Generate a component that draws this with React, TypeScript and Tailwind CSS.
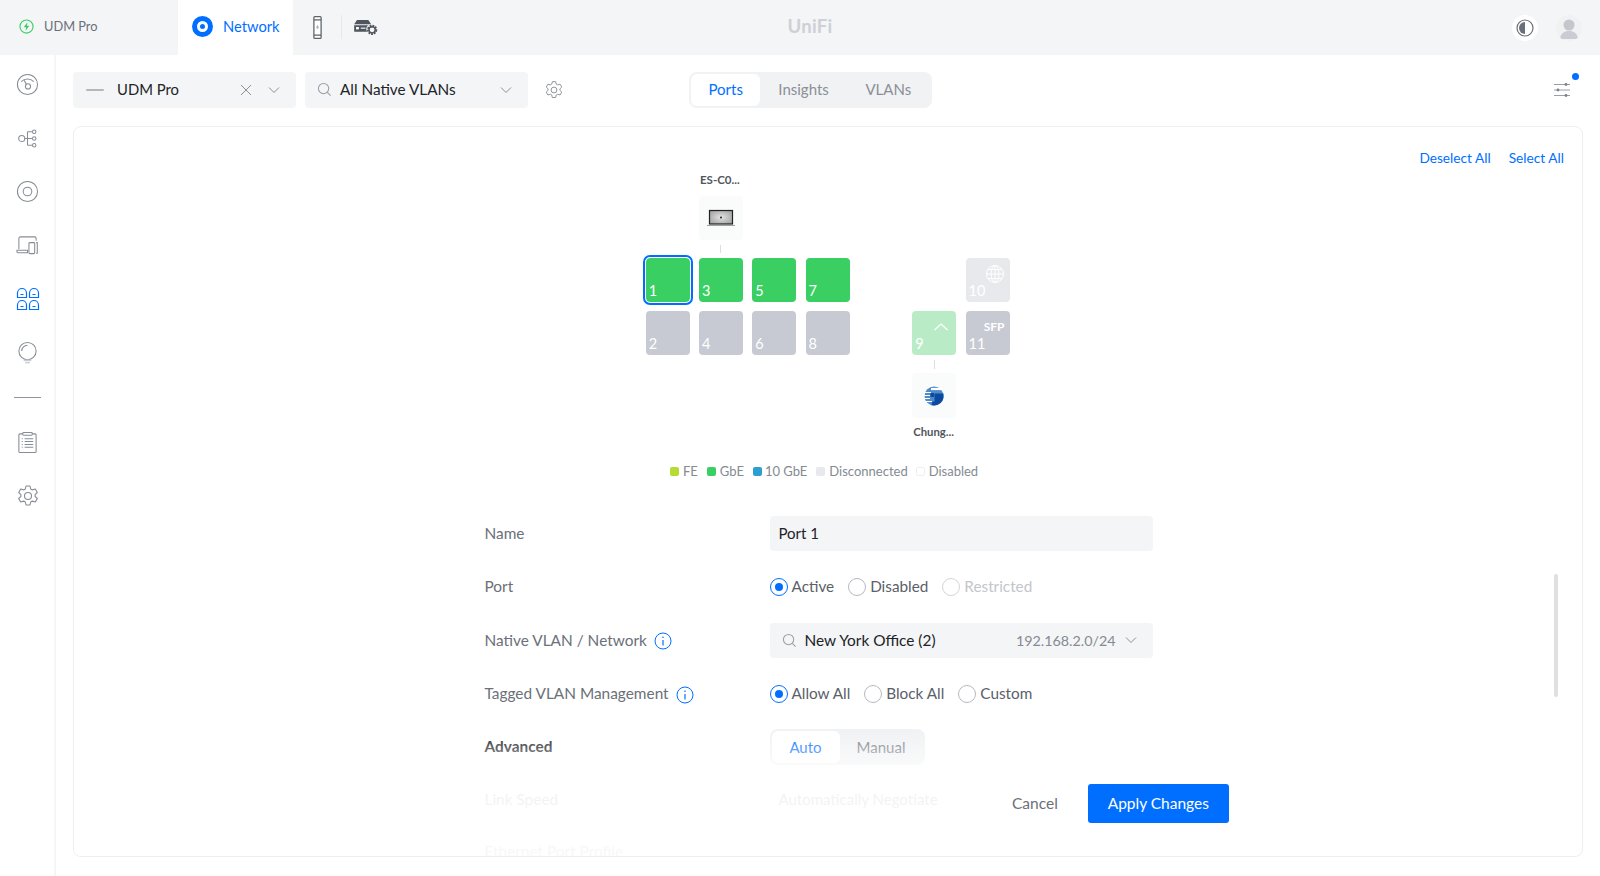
import React from "react";

function Tile({ n, kind, children, selected }: { n: string; kind: "on" | "off" | "up" | "dim"; children?: React.ReactNode; selected?: boolean }) {
  const bg = kind === "on" ? "bg-[#39cf63]" : kind === "off" ? "bg-[#c7cad3]" : kind === "up" ? "bg-[#b9ecc6]" : "bg-[#e8e9ed]";
  return (
    <div className={`relative w-[44px] h-[44px] rounded-[4px] ${bg}`}>
      {selected && <div className="absolute -inset-[3px] rounded-[7px] border-2 border-[#006fff] shadow-[inset_0_0_0_1px_#fff]" />}
      <span className="absolute left-[3px] bottom-[2px] text-[14.500px] leading-[18px] text-white">{n}</span>
      {children}
    </div>
  );
}

function Radio({ label, on, dim }: { label: string; on?: boolean; dim?: boolean }) {
  return (
    <div className="flex items-center gap-[4px]">
      <span className={`w-[18px] h-[18px] rounded-full border flex items-center justify-center ${on ? "border-[#006fff]" : "border-[#b6b9c1]"} ${dim ? "opacity-60" : ""}`}>
        {on && <span className="w-[8px] h-[8px] rounded-full bg-[#006fff]" />}
      </span>
      <span className={`text-[15.300px] ${dim ? "text-[#c3c6cc]" : "text-[#5b6069]"}`}>{label}</span>
    </div>
  );
}

function Info() {
  return (
    <svg viewBox="0 0 18 18" className="w-[18px] h-[18px] ml-[7px] mt-[2px]" fill="none" stroke="#006fff">
      <circle cx="9" cy="9" r="8" />
      <path d="M9 8v5.400" strokeWidth="1.200" />
      <circle cx="9" cy="5.300" r=".8" fill="#006fff" stroke="none" />
    </svg>
  );
}

function Chevron({ className }: { className?: string }) {
  return (
    <svg viewBox="0 0 12 8" className={`w-[12px] h-[8px] ${className ?? ""}`} fill="none" stroke="#8b8f97" strokeWidth="1">
      <path d="M1 1.500l5 5 5-5" />
    </svg>
  );
}

function Search() {
  return (
    <svg viewBox="0 0 16 16" className="w-[15px] h-[15px]" fill="none" stroke="#9a9ea6" strokeWidth="1.100">
      <circle cx="7" cy="7" r="5.500" />
      <path d="M11 11l3.500 3.500" />
    </svg>
  );
}

function Gear({ size, color, className }: { size: string; color: string; className?: string }) {
  return (
    <svg viewBox="0 0 24 24" className={`${size} ${className ?? ""}`} fill="none" stroke={color} strokeWidth="1.100" strokeLinejoin="round">
      <path d="M10 2h4l.7 3 1.600.9 3-.9 2 3.500-2.200 2.100v1.800l2.200 2.100-2 3.500-3-.9-1.600.9-.7 3h-4l-.7-3-1.600-.9-3 .9-2-3.500 2.200-2.100v-1.800L2.700 8.500l2-3.500 3 .9 1.600-.9z" />
      <circle cx="12" cy="12" r="3.500" />
    </svg>
  );
}

const S = "#878c96";

function SideIcon({ children }: { children: React.ReactNode }) {
  return <div className="h-[53.500px] flex items-center justify-center">{children}</div>;
}

function Row({ label, children, info }: { label: string; children?: React.ReactNode; info?: boolean }) {
  return (
    <div className="flex items-center h-[53.300px]">
      <div className="w-[285px] flex items-center text-[15.400px] text-[#6b7079]">
        {label}
        {info && <Info />}
      </div>
      {children}
    </div>
  );
}

export default function App() {
  return (
    <div className="w-[1600px] h-[876px] overflow-hidden bg-white flex flex-col font-['Lato',sans-serif] text-[#6b7079]">
      {/* top bar */}
      <header className="h-[55px] shrink-0 bg-[#f4f5f6] flex items-stretch relative">
        <div className="w-[178px] flex items-center pl-[19px] pb-[2px] gap-[10px] text-[12.800px]">
          <svg viewBox="0 0 16 16" className="w-[15px] h-[15px]" fill="none">
            <circle cx="8" cy="8" r="7" stroke="#39cf63" strokeWidth="1.200" />
            <path d="M9 3.500 5 8.800h2.600L7 12.500l4-5.300H8.400z" fill="#39cf63" />
          </svg>
          <span className="text-[#6b7079]">UDM Pro</span>
        </div>
        <div className="w-[115px] bg-white flex items-center pl-[14px] pb-[2px] gap-[10px]">
          <span className="w-[21px] h-[21px] rounded-full bg-[#006fff] flex items-center justify-center">
            <span className="w-[11px] h-[11px] rounded-full border-[3px] border-white" />
          </span>
          <span className="text-[#006fff] text-[14.700px]">Network</span>
        </div>
        <div className="flex items-center pl-[20px] pb-[1px]">
          <svg viewBox="0 0 10 26" className="w-[9px] h-[25px]">
            <rect x="1" y="1" width="8" height="24" rx="1" fill="#fff" stroke="#5d626b" strokeWidth="1.400" />
            <path d="M1 4.500h8M1 21.500h8" stroke="#5d626b" strokeWidth="1.400" />
            <path d="M5 10l1.200 2.500a1.300 1.300 0 1 1-2.400 0z" fill="#a7abb2" />
          </svg>
          <span className="w-px h-[24px] bg-[#e6e8eb] ml-[19px]" />
          <svg viewBox="0 0 26 18" className="w-[25px] h-[17px] ml-[11px]">
            <path d="M4 1h12l3 4.500H1z" fill="#50565e" />
            <path d="M1 6.500h15a4.500 4.500 0 0 0-1 7H1.500a.5.5 0 0 1-.5-.5z" fill="#50565e" />
            <rect x="3" y="8.500" width="3" height="2.500" fill="#fff" />
            <path d="M8 9.700h5" stroke="#fff" strokeWidth="1.200" />
            <circle cx="20" cy="11.500" r="4.200" fill="none" stroke="#50565e" strokeWidth="2.600" strokeDasharray="1.800 1" />
            <circle cx="20" cy="11.500" r="3.300" fill="none" stroke="#50565e" strokeWidth="1.500" />
          </svg>
        </div>
        <div className="absolute inset-0 flex items-center justify-center pl-[20px] pb-[1px] pointer-events-none">
          <span className="text-[18.500px] font-bold text-[#cdd0d5] tracking-[0.3px]">UniFi</span>
        </div>
        <div className="ml-auto flex items-center gap-[18px] pr-[18px]">
          <span className="w-[26px] h-[26px] rounded-full bg-white flex items-center justify-center">
            <svg viewBox="0 0 18 18" className="w-[18px] h-[18px]">
              <circle cx="9" cy="9" r="8" fill="#fff" stroke="#6a6f78" strokeWidth="1.200" />
              <path d="M9 3a6 6 0 0 0 0 12z" fill="#6a6f78" />
            </svg>
          </span>
          <span className="w-[26px] h-[26px] rounded-full bg-[#f0f1f3] overflow-hidden">
            <svg viewBox="0 0 26 26" className="w-[26px] h-[26px]">
              <circle cx="13" cy="10" r="5.500" fill="#c3c6cc" />
              <path d="M4 24c.5-5.500 4-8 9-8s8.500 2.500 9 8z" fill="#c9ccd2" />
            </svg>
          </span>
        </div>
      </header>

      <div className="flex-1 flex min-h-0">
        {/* sidebar */}
        <aside className="w-[56px] shrink-0 border-r-2 border-[#f6f6f7] flex flex-col pt-[3px] pl-[1px]">
          <SideIcon>
            <svg viewBox="0 0 24 24" className="w-[23px] h-[23px]" fill="none" stroke={S} strokeWidth="1.100">
              <circle cx="12" cy="12" r="10.500" />
              <path d="M5.500 9a9 9 0 0 1 13 0" />
              <path d="M8.500 7.500 11 12" />
              <circle cx="12.500" cy="14" r="2.700" />
            </svg>
          </SideIcon>
          <SideIcon>
            <svg viewBox="0 0 24 24" className="w-[23px] h-[23px]" fill="none" stroke={S} strokeWidth="1.100">
              <circle cx="6" cy="12" r="3.200" />
              <path d="M9 12h8M12 5h5M12 19h5M12 5v14" />
              <circle cx="19" cy="5" r="1.800" />
              <circle cx="19" cy="12" r="1.800" />
              <circle cx="19" cy="19" r="1.800" />
            </svg>
          </SideIcon>
          <SideIcon>
            <svg viewBox="0 0 24 24" className="w-[23px] h-[23px]" fill="none" stroke={S} strokeWidth="1.100">
              <circle cx="12" cy="12" r="10.500" />
              <circle cx="12" cy="12" r="4.500" />
            </svg>
          </SideIcon>
          <SideIcon>
            <svg viewBox="0 0 24 24" className="w-[23px] h-[23px]" fill="none" stroke={S} strokeWidth="1.100">
              <path d="M3 16V4.500A1.500 1.500 0 0 1 4.500 3h15A1.500 1.500 0 0 1 21 4.500V7" />
              <path d="M1 17h11v2.500H2a1 1 0 0 1-1-1z" />
              <rect x="13.500" y="9" width="6" height="11.500" rx="1" />
              <path d="M21 9h1.200v11H21" />
            </svg>
          </SideIcon>
          <SideIcon>
            <svg viewBox="0 0 24 24" className="w-[24px] h-[24px]" fill="none" stroke="#006fff" strokeWidth="1.200">
              <path d="M1.500 10.500V6a4.500 4.500 0 0 1 9 0v4.500zM13.500 10.500V6a4.500 4.500 0 0 1 9 0v4.500zM1.500 22.500V18a4.500 4.500 0 0 1 9 0v4.500zM13.500 22.500V18a4.500 4.500 0 0 1 9 0v4.500z" />
              <path d="M4.500 7.500h3M16.500 7.500h3M4.500 19.500h3M16.500 19.500h3" />
            </svg>
          </SideIcon>
          <SideIcon>
            <svg viewBox="0 0 24 24" className="w-[23px] h-[23px]" fill="none" stroke={S} strokeWidth="1.100">
              <circle cx="12" cy="10.500" r="9" />
              <path d="M6 10.500a6 6 0 0 1 6-6" />
              <path d="M8 20h8M9.500 22.500h5" strokeWidth="1.600" stroke="#c9ccd2" />
            </svg>
          </SideIcon>
          <div className="h-px w-[27px] bg-[#8f939b] self-center mt-[18px] mb-[18px]" />
          <SideIcon>
            <svg viewBox="0 0 24 24" className="w-[23px] h-[23px]" fill="none" stroke={S} strokeWidth="1.100">
              <rect x="3" y="3" width="18" height="19.500" rx="1.200" />
              <rect x="7" y="1.500" width="10" height="3" rx="1" fill="#fff" />
              <path d="M6 8h1M9 8h9M6 11h1M9 11h9M6 14h1M9 14h9M6 17h1M9 17h9" />
            </svg>
          </SideIcon>
          <SideIcon>
            <Gear size="w-[24px] h-[24px]" color={S} />
          </SideIcon>
        </aside>

        {/* main */}
        <main className="flex-1 min-w-0 pl-[17px] pr-[17px] relative">
          {/* toolbar */}
          <div className="h-[69px] mb-[2px] flex items-center">
            <div className="w-[223px] h-[36px] rounded-[4px] bg-[#f4f5f6] flex items-center pl-[13px] pr-[16px]">
              <span className="w-[18px] h-[2px] bg-[#b4b7bd] rounded-full" />
              <span className="ml-[13px] text-[14.800px] text-[#212327]">UDM Pro</span>
              <svg viewBox="0 0 12 12" className="w-[12px] h-[12px] ml-auto mr-[16px]" fill="none" stroke="#8b8f97">
                <path d="M1 1l10 10M11 1 1 11" />
              </svg>
              <Chevron />
            </div>
            <div className="w-[223px] h-[36px] rounded-[4px] bg-[#f4f5f6] flex items-center pl-[12px] pr-[16px] ml-[9px]">
              <Search />
              <span className="ml-[8px] text-[15.300px] text-[#212327]">All Native VLANs</span>
              <Chevron className="ml-auto" />
            </div>
            <Gear size="w-[20px] h-[20px]" color={S} className="ml-[16px]" />
            <div className="ml-[125px] w-[243px] h-[36px] rounded-[8px] bg-[#f1f2f4] p-[2px] flex text-[15px]">
              <div className="w-[70px] rounded-[6px] bg-white text-[#006fff] flex items-center justify-center">Ports</div>
              <div className="w-[87px] flex items-center justify-center text-[#8b8f97]">Insights</div>
              <div className="w-[84px] flex items-center justify-center text-[#8b8f97]">VLANs</div>
            </div>
            <div className="ml-auto relative mr-[13px]">
              <svg viewBox="0 0 16 14" className="w-[16px] h-[14px]" fill="none" stroke="#9a9ea6">
                <path d="M0 1.500h16M0 7h16M0 12.500h16" />
                <circle cx="12" cy="1.500" r="1.400" fill="#7c8088" stroke="none" />
                <circle cx="4" cy="7" r="1.400" fill="#7c8088" stroke="none" />
                <circle cx="12" cy="12.500" r="1.400" fill="#7c8088" stroke="none" />
              </svg>
              <span className="absolute -top-[10px] -right-[9px] w-[7px] h-[7px] rounded-full bg-[#006fff]" />
            </div>
          </div>

          {/* card */}
          <section className="h-[731px] rounded-[8px] border border-[#edeef0] relative overflow-hidden">
            <div className="absolute top-[21px] right-[18px] flex gap-[18px] text-[13.700px] text-[#006fff]">
              <span>Deselect All</span>
              <span>Select All</span>
            </div>

            {/* port diagram */}
            <div className="pt-[45px] pl-[571.700px] flex items-start">
              <div className="flex flex-col">
                <div className="ml-[53.300px] w-[44px] flex flex-col items-center">
                  <span className="w-[44px] pl-[1px] whitespace-nowrap text-[11.500px] font-bold text-[#50565e] leading-[16px] h-[16px]">ES-C0...</span>
                  <div className="mt-[8px] w-[44px] h-[44px] rounded-[4px] bg-[#fafbfb] flex items-center justify-center">
                    <svg viewBox="0 0 28 18" className="w-[28px] h-[18px]">
                      <defs>
                        <radialGradient id="scr" cx="50%" cy="50%" r="60%">
                          <stop offset="0%" stopColor="#e4e4e4" />
                          <stop offset="100%" stopColor="#a3a3a3" />
                        </radialGradient>
                      </defs>
                      <rect x="2.500" y="1.500" width="23" height="13.500" fill="url(#scr)" stroke="#222" strokeWidth="1.200" />
                      <path d="M0 16.500h28" stroke="#a0a0a0" strokeWidth="1" />
                      <circle cx="14" cy="8.500" r="1" fill="#222" />
                    </svg>
                  </div>
                  <span className="w-px h-[8px] bg-[#dcdee2] mt-[5px] mb-[5px]" />
                </div>
                <div className="grid grid-cols-[repeat(4,44px)] gap-x-[9.300px] gap-y-[9.300px]">
                  <Tile n="1" kind="on" selected />
                  <Tile n="3" kind="on" />
                  <Tile n="5" kind="on" />
                  <Tile n="7" kind="on" />
                  <Tile n="2" kind="off" />
                  <Tile n="4" kind="off" />
                  <Tile n="6" kind="off" />
                  <Tile n="8" kind="off" />
                </div>
              </div>
              <div className="ml-[62.700px] mt-[86px] grid grid-cols-[repeat(2,44px)] gap-x-[9.300px] gap-y-[9.300px] items-start">
                <div />
                <Tile n="10" kind="dim">
                  <svg viewBox="0 0 18 18" className="absolute top-[7px] right-[6px] w-[18px] h-[18px]" fill="none" stroke="#fff" strokeWidth="1">
                    <circle cx="9" cy="9" r="8.500" />
                    <ellipse cx="9" cy="9" rx="4" ry="8.500" />
                    <path d="M9 .5v17M.5 9h17M2 4.500h14M2 13.500h14" />
                  </svg>
                </Tile>
                <div className="flex flex-col items-center">
                  <Tile n="9" kind="up">
                    <svg viewBox="0 0 14 8" className="absolute top-[12px] right-[8px] w-[14px] h-[8px]" fill="none" stroke="#fff" strokeWidth="1.200">
                      <path d="M.5 7 7 1l6.500 6" />
                    </svg>
                  </Tile>
                  <span className="w-px h-[9px] bg-[#dcdee2] mt-[5px] mb-[4px]" />
                  <div className="w-[44px] h-[45px] rounded-[4px] bg-[#fafbfb] flex items-center justify-center">
                    <svg viewBox="0 0 20 20" className="w-[20px] h-[20px]">
                      <circle cx="10" cy="10" r="9.500" fill="#4f8ccb" />
                      <path d="M0 6.500h7M0 9.500h6M0 12.500h6M1 15.500h7" stroke="#fff" strokeWidth="1" />
                      <path d="M7 3h12" stroke="#fff" strokeWidth="2.200" />
                      <path d="M10.500 7.500h9V12a9.500 9.500 0 0 1-9 7.500l-3-.2 1-3.800h2z" fill="#0b4a9e" />
                      <path d="M6.500 7h3.500v4H6.500z" fill="#0b4a9e" />
                    </svg>
                  </div>
                  <span className="w-[44px] pl-[1px] whitespace-nowrap mt-[6px] text-[11.300px] font-bold leading-[16px] text-[#50565e]">Chung...</span>
                </div>
                <Tile n="11" kind="off">
                  <span className="absolute top-[9px] right-[5px] text-[12px] leading-[14px] font-bold text-white">SFP</span>
                </Tile>
              </div>
            </div>

            {/* legend */}
            <div className="absolute top-[336px] left-[596px] flex items-center text-[13px] leading-[16px] text-[#858a93]">
              <span className="w-[9px] h-[9px] rounded-[2px] bg-[#b5dc34]" />
              <span className="ml-[4px]">FE</span>
              <span className="ml-[9px] w-[9px] h-[9px] rounded-[2px] bg-[#39cf63]" />
              <span className="ml-[4px]">GbE</span>
              <span className="ml-[9px] w-[9px] h-[9px] rounded-[2px] bg-[#2c9fd0]" />
              <span className="ml-[3px]">10 GbE</span>
              <span className="ml-[9px] w-[9px] h-[9px] rounded-[2px] bg-[#e8e9ed]" />
              <span className="ml-[4px]">Disconnected</span>
              <span className="ml-[8px] w-[9px] h-[9px] rounded-[2px] border border-[#eeeff1] bg-white" />
              <span className="ml-[4px]">Disabled</span>
            </div>

            {/* form */}
            <div className="absolute top-[380px] left-[410.500px] w-[670px]">
              <Row label="Name">
                <div className="w-[383px] h-[35px] rounded-[4px] bg-[#f4f5f6] flex items-center pl-[9px] text-[15px] text-[#212327]">Port 1</div>
              </Row>
              <Row label="Port">
                <div className="flex gap-[14px]">
                  <Radio label="Active" on />
                  <Radio label="Disabled" />
                  <Radio label="Restricted" dim />
                </div>
              </Row>
              <Row label="Native VLAN / Network" info>
                <div className="w-[383px] h-[35px] rounded-[4px] bg-[#f4f5f6] flex items-center pl-[12px] pr-[16px]">
                  <Search />
                  <span className="ml-[8px] text-[15.400px] text-[#212327]">New York Office (2)</span>
                  <span className="ml-auto text-[14.300px] text-[#858a93]">192.168.2.0/24</span>
                  <Chevron className="ml-[9px]" />
                </div>
              </Row>
              <Row label="Tagged VLAN Management" info>
                <div className="flex gap-[14px]">
                  <Radio label="Allow All" on />
                  <Radio label="Block All" />
                  <Radio label="Custom" />
                </div>
              </Row>
              <div className="flex items-center h-[53.300px] -mb-[1px]">
                <div className="w-[285px] text-[15.400px] font-bold text-[#212327]">Advanced</div>
                <div className="w-[155px] h-[36px] rounded-[8px] bg-[#f1f2f4] p-[2px] flex text-[15px]">
                  <div className="w-[68px] rounded-[6px] bg-white text-[#006fff] flex items-center justify-center">Auto</div>
                  <div className="flex-1 flex items-center justify-center text-[#7d828b]">Manual</div>
                </div>
              </div>
              <Row label="Link Speed">
                <span className="ml-[9px] text-[15px]">Automatically Negotiate</span>
              </Row>
              <div className="h-[14px] mt-[18px] leading-[14px] text-[15.400px] whitespace-nowrap">Ethernet Port Profile</div>
            </div>

            {/* scrollbar */}
            <div className="absolute left-[1480px] top-[447px] w-[4px] h-[123px] rounded-full bg-[#dfe0e2]" />

            {/* fade with actions */}
            <div className="absolute left-0 right-[30px] bottom-0 h-[125px] bg-gradient-to-b from-white/0 via-white/90 via-[40%] to-white/95" />
            <div className="absolute left-[938px] top-[657px] flex items-center">
              <span className="text-[15.500px] text-[#6b7079]">Cancel</span>
              <div className="ml-[30px] w-[141px] h-[39px] rounded-[3px] bg-[#006fff] text-white text-[15.500px] flex items-center justify-center">Apply Changes</div>
            </div>
          </section>
        </main>
      </div>
    </div>
  );
}
